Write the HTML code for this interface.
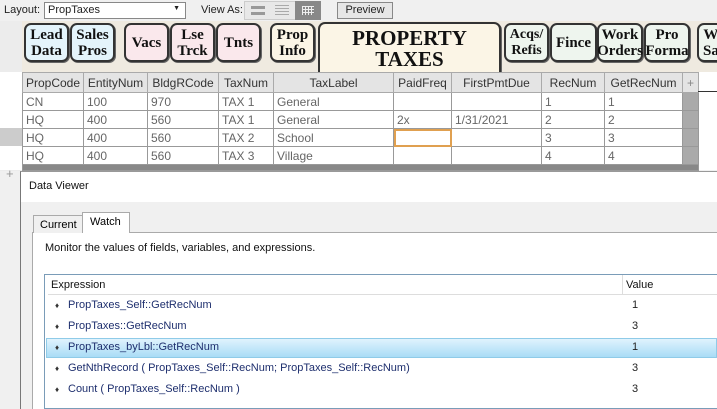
<!DOCTYPE html><html><head><style>
*{margin:0;padding:0;box-sizing:border-box}
body{width:717px;height:409px;overflow:hidden;background:#f0f0f0;font-family:"Liberation Sans",sans-serif;position:relative}
.a{position:absolute}
.btn{position:absolute;border:2px solid #333;border-radius:7px;font-family:"Liberation Serif",serif;font-weight:bold;font-size:15px;line-height:16px;text-align:center;display:flex;align-items:center;justify-content:center;color:#111;box-shadow:1px 1px 0 #666}
.bl{background:#e4f4fb}.pk{background:#fae8ec}.cr{background:#fbf5e6}.gr{background:#eef5ee}
table{border-collapse:collapse;font-size:12px;color:#666}
td{border:1px solid #999;height:18px;padding:0 3px;background:#fff;white-space:nowrap;overflow:hidden}
th{border:1px solid #aaa;height:20px;font-weight:normal;color:#333;background:#e4e4e4}
.row{position:absolute;left:44px;height:21px;width:673px;font-family:"Liberation Sans",sans-serif;font-size:11px;color:#1e2f6e;line-height:21px}
.row b{position:absolute;left:11px;font-size:8px;color:#333}
.row span{position:absolute;left:24px}
.row i{position:absolute;left:588px;font-style:normal;color:#222}
</style></head><body>
<div class="a" style="left:0;top:0;width:717px;height:21px;background:#f0f0f0;font-size:11px;color:#222">
<span class="a" style="left:4px;top:4px">Layout:</span>
<div class="a" style="left:44px;top:2px;width:142px;height:17px;border:1px solid #888;background:#fff;padding:1px 3px">PropTaxes<span class="a" style="right:5px;top:2px;font-size:7px">▼</span></div>
<span class="a" style="left:201px;top:4px">View As:</span>
<div class="a" style="left:244px;top:1px;width:77px;height:19px;background:#e8e8e8;border:1px solid #ccc"></div>
<div class="a" style="left:251px;top:6px;width:14px;height:9px;border-top:3px solid #999;border-bottom:3px solid #999"></div>
<div class="a" style="left:275px;top:5px;width:14px;height:11px;background:repeating-linear-gradient(#aaa 0 1px,transparent 1px 3px)"></div>
<div class="a" style="left:295px;top:1px;width:26px;height:19px;background:#888"></div>
<div class="a" style="left:302px;top:6px;width:12px;height:9px;background:repeating-linear-gradient(90deg,#eee 0 1px,transparent 1px 3px),repeating-linear-gradient(#eee 0 1px,transparent 1px 3px)"></div>
<div class="a" style="left:337px;top:2px;width:56px;height:17px;border:1px solid #888;background:#e6e6e6;text-align:center;line-height:15px">Preview</div>
</div>
<div class="a" style="left:0;top:21px;width:717px;height:51px;background:#efeae0"></div>
<div class="a" style="left:0;top:21px;width:22px;height:150px;background:#ececec"></div>
<div class="btn bl" style="left:24px;top:23px;width:45px;height:39px">Lead<br>Data</div>
<div class="btn bl" style="left:70px;top:23px;width:45px;height:39px">Sales<br>Pros</div>
<div class="btn pk" style="left:124px;top:23px;width:45px;height:39px">Vacs</div>
<div class="btn pk" style="left:170px;top:23px;width:45px;height:39px">Lse<br>Trck</div>
<div class="btn pk" style="left:216px;top:23px;width:45px;height:39px">Tnts</div>
<div class="btn cr" style="left:270px;top:23px;width:45px;height:39px">Prop<br>Info</div>
<div class="btn cr" style="left:318px;top:22px;width:183px;height:52px;font-size:21px;line-height:21px;border-bottom:none;border-radius:7px 7px 0 0">PROPERTY<br>TAXES</div>
<div class="btn gr" style="left:504px;top:23px;width:45px;height:39px;font-size:14px">Acqs/<br>Refis</div>
<div class="btn gr" style="left:550px;top:23px;width:47px;height:39px">Fince</div>
<div class="btn gr" style="left:597px;top:23px;width:46px;height:39px">Work<br>Orders</div>
<div class="btn gr" style="left:644px;top:23px;width:46px;height:39px">Pro<br>Forma</div>
<div class="btn gr" style="left:697px;top:23px;width:40px;height:39px;justify-content:flex-start;padding-left:4px">W<br>Sa</div>
<div class="a" style="left:0;top:72px;width:717px;height:98px;background:#fff"></div>
<div class="a" style="left:0;top:128px;width:22px;height:18px;background:#ccc"></div>
<table class="a" style="left:22px;top:72px;table-layout:fixed;width:676px">
<colgroup><col style="width:61px"><col style="width:64px"><col style="width:71px"><col style="width:55px"><col style="width:120px"><col style="width:58px"><col style="width:90px"><col style="width:63px"><col style="width:78px"><col style="width:16px"></colgroup>
<tr><th>PropCode</th><th>EntityNum</th><th>BldgRCode</th><th>TaxNum</th><th>TaxLabel</th><th>PaidFreq</th><th>FirstPmtDue</th><th>RecNum</th><th>GetRecNum</th><th style="color:#888">+</th></tr>
<tr><td>CN</td><td>100</td><td>970</td><td>TAX 1</td><td>General</td><td></td><td></td><td>1</td><td>1</td><td style="background:#aaa"></td></tr>
<tr><td>HQ</td><td>400</td><td>560</td><td>TAX 1</td><td>General</td><td>2x</td><td>1/31/2021</td><td>2</td><td>2</td><td style="background:#aaa"></td></tr>
<tr><td>HQ</td><td>400</td><td>560</td><td>TAX 2</td><td>School</td><td style="outline:2px solid #e0a050;outline-offset:-2px"></td><td></td><td>3</td><td>3</td><td style="background:#aaa"></td></tr>
<tr><td>HQ</td><td>400</td><td>560</td><td>TAX 3</td><td>Village</td><td></td><td></td><td>4</td><td>4</td><td style="background:#aaa"></td></tr>
<tr><td style="height:6px;background:#888" colspan="10"></td></tr>
</table>
<div class="a" style="left:698px;top:91px;width:19px;height:1px;background:#333"></div>
<span class="a" style="left:6px;top:166px;color:#999;font-size:13px">+</span>
<div class="a" style="left:20px;top:171px;width:697px;height:238px;background:#fff;border-left:1px solid #777;border-top:1px solid #999"></div>
<span class="a" style="left:29px;top:180px;font-size:11px;color:#111">Data Viewer</span>
<div class="a" style="left:21px;top:202px;width:696px;height:207px;background:#f0f0f0"></div>
<div class="a" style="left:32px;top:232px;width:685px;height:177px;background:#fff;border-left:1px solid #aaa;border-top:1px solid #aaa"></div>
<div class="a" style="left:33px;top:215px;width:50px;height:18px;background:#f0f0f0;border:1px solid #aaa;border-bottom:none;font-size:11px;padding:3px 0 0 6px">Current</div>
<div class="a" style="left:82px;top:212px;width:48px;height:21px;background:#fff;border:1px solid #aaa;border-bottom:none;font-size:11px;padding:3px 0 0 7px">Watch</div>
<span class="a" style="left:45px;top:242px;font-size:11px;color:#111">Monitor the values of fields, variables, and expressions.</span>
<div class="a" style="left:44px;top:274px;width:673px;height:135px;border:1px solid #7a9cb8;border-right:none;background:#fff"></div>
<div class="a" style="left:48px;top:275px;width:669px;height:20px;border-bottom:1px solid #ddd;font-size:11px;color:#111;line-height:20px;padding-left:3px">Expression<span class="a" style="left:574px;top:0;border-left:1px solid #ddd;padding-left:3px">Value</span></div>
<div class="a" style="left:46px;top:338px;width:671px;height:20px;background:linear-gradient(#e0f3fd,#a9dcf6);border:1px solid #8fcbe8"></div>
<div class="row" style="top:295px"><b>♦</b><span>PropTaxes_Self::GetRecNum</span><i>1</i></div>
<div class="row" style="top:316px"><b>♦</b><span>PropTaxes::GetRecNum</span><i>3</i></div>
<div class="row" style="top:337px"><b>♦</b><span>PropTaxes_byLbl::GetRecNum</span><i>1</i></div>
<div class="row" style="top:358px"><b>♦</b><span>GetNthRecord ( PropTaxes_Self::RecNum; PropTaxes_Self::RecNum)</span><i>3</i></div>
<div class="row" style="top:379px"><b>♦</b><span>Count ( PropTaxes_Self::RecNum )</span><i>3</i></div>
</body></html>
